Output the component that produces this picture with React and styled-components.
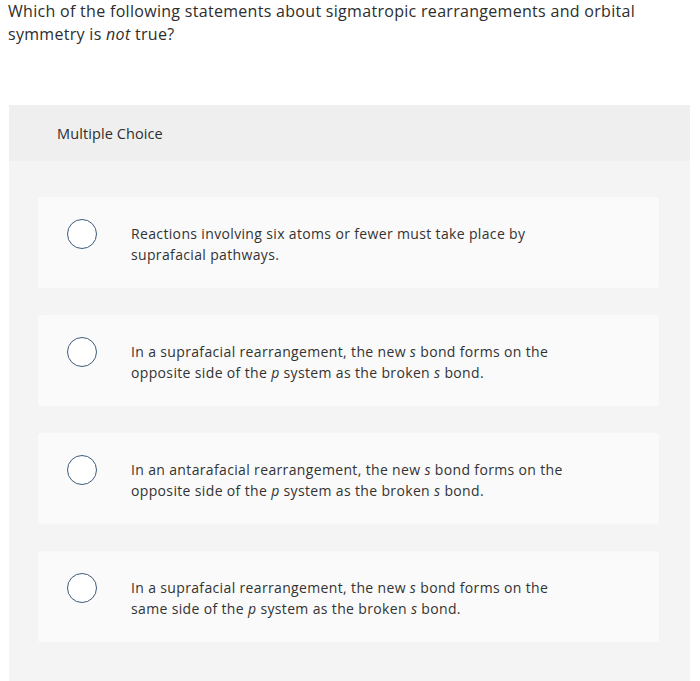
import React from 'react';
import styled, { createGlobalStyle } from 'styled-components';

const GlobalStyle = createGlobalStyle`
  body {
    margin: 0;
    background: #ffffff;
    font-family: "Open Sans", Lato, Arial, sans-serif;
    color: #333333;
  }
`;

const Page = styled.div`
  padding: 0 10px 0 8px;
`;

const Question = styled.p`
  margin: 0;
  max-width: 650px;
  font-size: 16px;
  line-height: 23px;
  letter-spacing: 0.3px;
  color: #2d2d2d;
`;

const Panel = styled.div`
  margin: 59px 0 0 1px;
  width: 681px;
  background: #f4f4f4;
  padding-bottom: 40px;
`;

const PanelHeader = styled.div`
  height: 56px;
  display: flex;
  align-items: center;
  padding-left: 48px;
  background: #efefef;
  font-size: 14.5px;
  letter-spacing: 0.1px;
  color: #2d2d2d;
`;

const Choices = styled.div`
  display: flex;
  flex-direction: column;
  gap: 27px;
  padding: 36px 31px 0 29px;
`;

const Choice = styled.label`
  display: flex;
  align-items: flex-start;
  min-height: 91px;
  box-sizing: border-box;
  padding: 26px 20px 20px 29px;
  background: #fafafa;
  border-radius: 3px;
  cursor: pointer;
`;

const Radio = styled.span`
  flex: none;
  width: 30px;
  height: 30px;
  box-sizing: border-box;
  margin-top: -4px;
  margin-right: 34px;
  border: 1.5px solid #3e5b7a;
  border-radius: 50%;
  background: #ffffff;
`;

const ChoiceText = styled.span`
  font-size: 14px;
  line-height: 21px;
  letter-spacing: 0.35px;
  color: #333333;
  max-width: 436px;
`;

const choices = [
  <>Reactions involving six atoms or fewer must take place by suprafacial pathways.</>,
  <>In a suprafacial rearrangement, the new <i>s</i> bond forms on the opposite side of the <i>p</i> system as the broken <i>s</i> bond.</>,
  <>In an antarafacial rearrangement, the new <i>s</i> bond forms on the opposite side of the <i>p</i> system as the broken <i>s</i> bond.</>,
  <>In a suprafacial rearrangement, the new <i>s</i> bond forms on the same side of the <i>p</i> system as the broken <i>s</i> bond.</>,
];

const App = () => {
  return (
    <Page>
      <GlobalStyle />
      <Question>
        Which of the following statements about sigmatropic rearrangements and orbital symmetry is <i>not</i> true?
      </Question>
      <Panel>
        <PanelHeader>Multiple Choice</PanelHeader>
        <Choices>
          {choices.map((c, i) => (
            <Choice key={i}>
              <Radio />
              <ChoiceText>{c}</ChoiceText>
            </Choice>
          ))}
        </Choices>
      </Panel>
    </Page>
  );
};

export default App;
